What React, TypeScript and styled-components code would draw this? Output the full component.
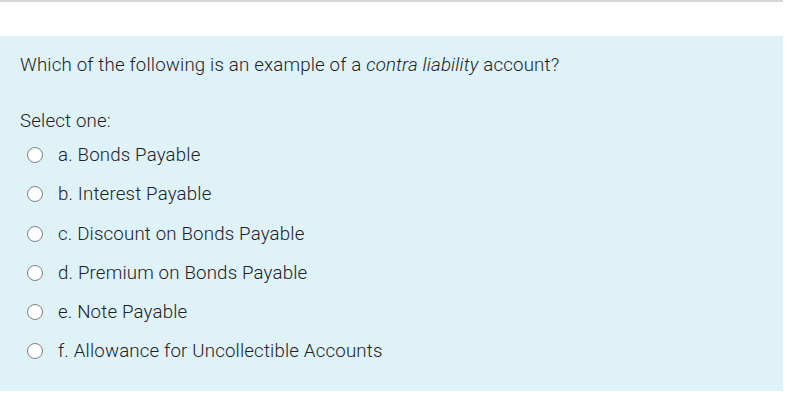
import React from "react";
import styled, { createGlobalStyle } from "styled-components";

const Global = createGlobalStyle`
  html, body { margin: 0; padding: 0; background: #fff; }
  body { font-family: Roboto, "Noto Sans", Arial, sans-serif; }
`;

const Page = styled.div`
  width: 790px;
  height: 403px;
  background: #fff;
  display: flex;
  flex-direction: column;
`;

const TopRule = styled.div`
  width: 783px;
  height: 2px;
  background: #d4d7da;
`;

const Panel = styled.div`
  width: 783px;
  margin-top: 34px;
  height: 355px;
  box-sizing: border-box;
  background: #def2f8;
  padding: 16px 20px 0 20px;
  color: #1d2125;
  font-size: 18.7px;
  font-weight: 300;
  letter-spacing: 0.16px;
`;

const Question = styled.p`
  margin: 0;
  line-height: 26px;
`;

const Prompt = styled.div`
  margin-top: 30px;
  line-height: 26px;
`;

const Options = styled.div`
  display: flex;
  flex-direction: column;
  margin-top: 8px;
  gap: 13.3px;
`;

const Option = styled.label`
  display: flex;
  align-items: center;
  height: 26px;
  padding-left: 7px;
  gap: 15px;
  line-height: 26px;
`;

const Radio = styled.span`
  width: 16px;
  height: 16px;
  border: 1px solid #7d7f82;
  border-radius: 50%;
  background: #fff;
  box-sizing: border-box;
  flex: none;
`;

const options = [
  "a. Bonds Payable",
  "b. Interest Payable",
  "c. Discount on Bonds Payable",
  "d. Premium on Bonds Payable",
  "e. Note Payable",
  "f. Allowance for Uncollectible Accounts",
];

export default function App() {
  return (
    <Page>
      <Global />
      <TopRule />
      <Panel>
        <Question>
          Which of the following is an example of a <em>contra liability</em> account?
        </Question>
        <Prompt>Select one:</Prompt>
        <Options>
          {options.map((o) => (
            <Option key={o}>
              <Radio />
              <span>{o}</span>
            </Option>
          ))}
        </Options>
      </Panel>
    </Page>
  );
}
